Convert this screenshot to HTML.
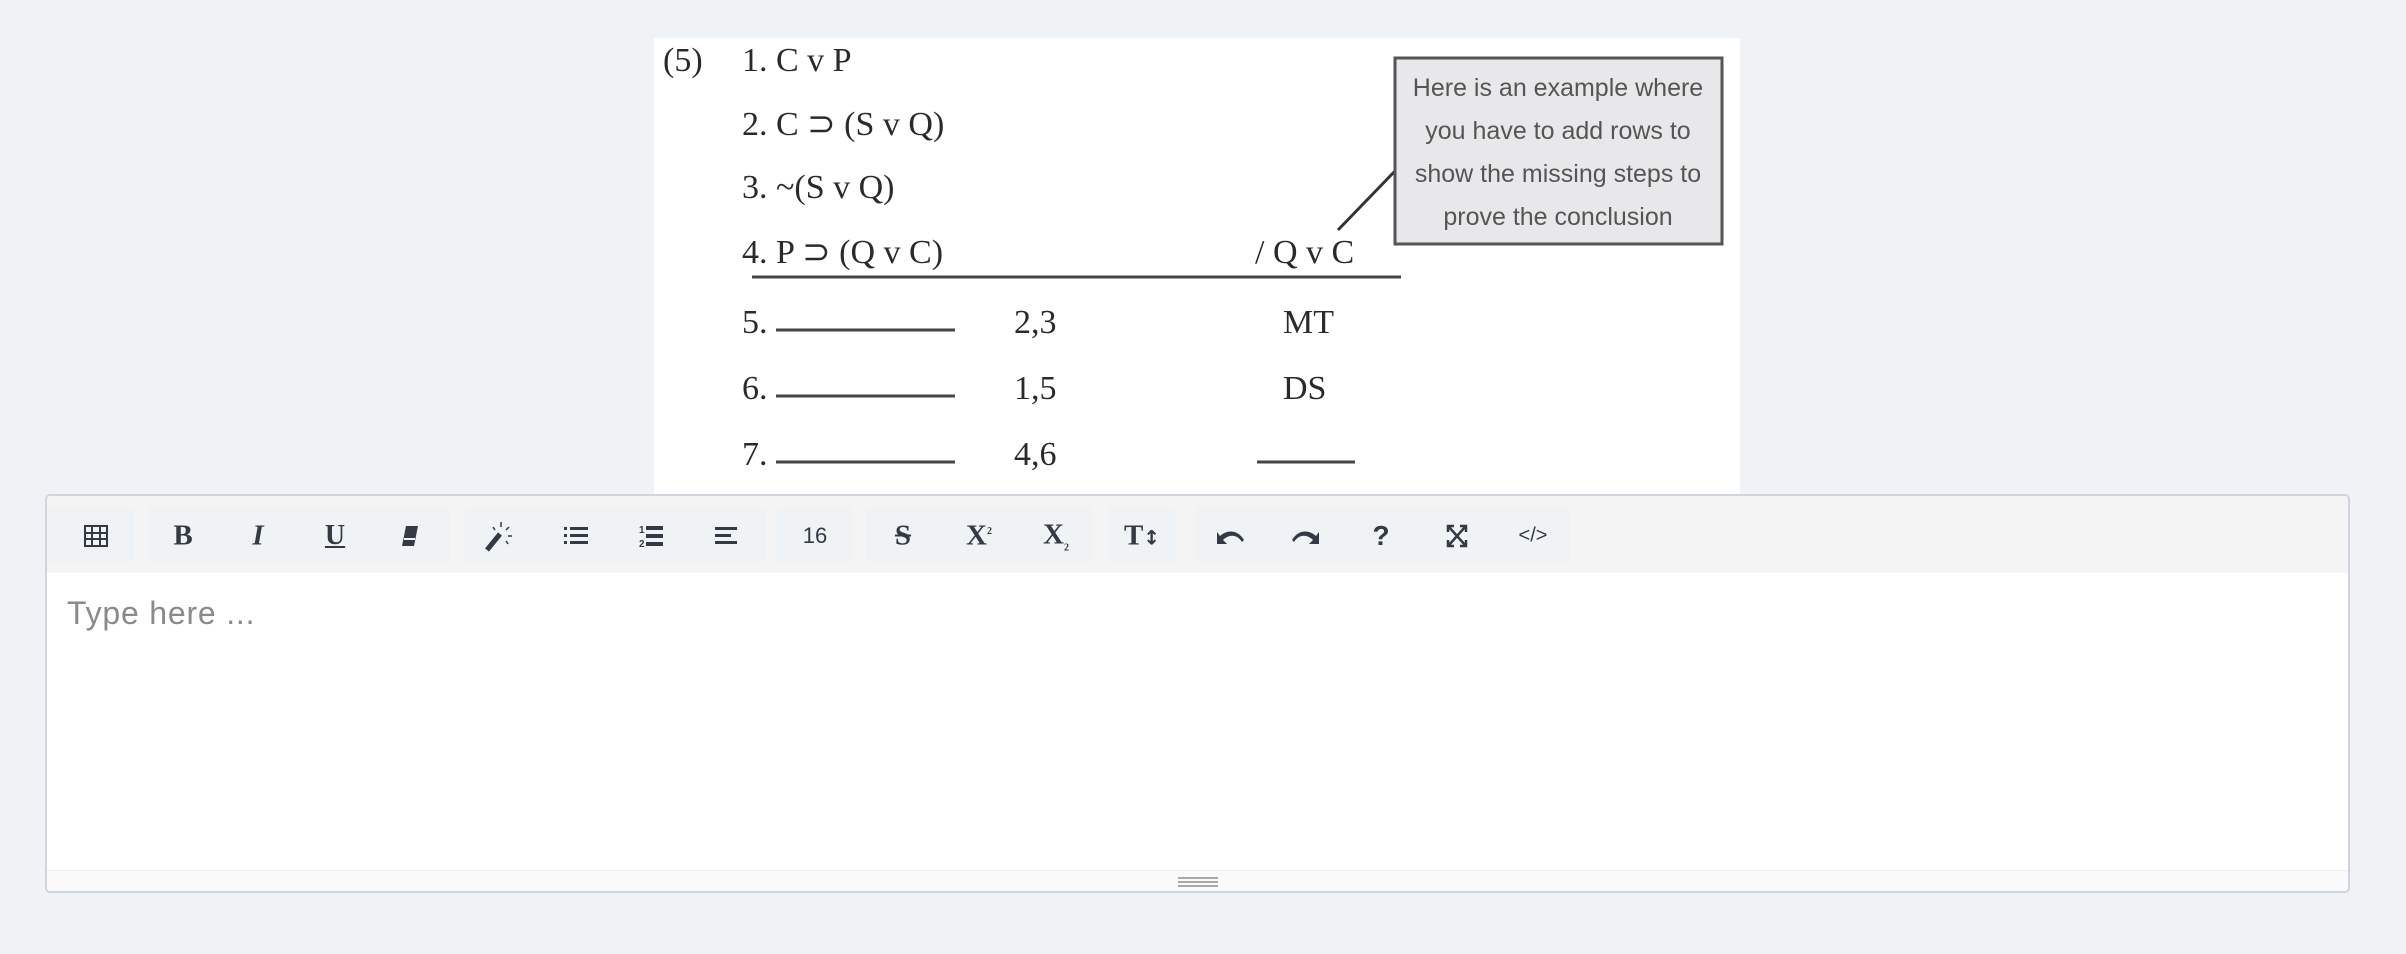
<!DOCTYPE html>
<html><head><meta charset="utf-8"><style>
html,body{margin:0;padding:0}
body{width:2406px;height:954px;background:#f0f3f6;position:relative;overflow:hidden;font-family:"Liberation Sans",sans-serif}
.img{position:absolute;left:654px;top:38px;width:1086px;height:460px;background:#fff}
.ed{position:absolute;left:45px;top:494px;width:2305px;height:399px;border:2px solid #d0d4dc;border-radius:5px;background:#fff;box-sizing:border-box;overflow:hidden}
.tb{position:absolute;left:0;top:0;right:0;height:77px;background:#f4f4f4}
.grp{position:absolute;top:11px;height:55px;background:#f0f3f6}
.ic{position:absolute;top:40px;transform:translate(-50%,-50%);color:#333a45;font-weight:bold}
.ph{position:absolute;left:20px;top:99px;font-size:32px;color:#8a8a8a;letter-spacing:0.8px}
.rs{position:absolute;left:0;right:0;bottom:0;height:20px;background:#fafafa;border-top:1px solid #eee}
.rs i{position:absolute;left:1131px;width:40px;height:2px;background:#a8a8a8}
</style></head><body>
<div class="img">
<svg width="1086" height="460" style="position:absolute;left:0;top:0" font-family="Liberation Serif,serif" font-size="34" fill="#2a2a2a">
<text x="9" y="33">(5)</text>
<text x="88" y="33">1. C v P</text>
<text x="88" y="97">2. C ⊃ (S v Q)</text>
<text x="88" y="160">3. ~(S v Q)</text>
<text x="88" y="225">4. P ⊃ (Q v C)</text>
<text x="601" y="225">/ Q v C</text>
<line x1="98" y1="239" x2="747" y2="239" stroke="#444" stroke-width="3"/>
<text x="88" y="295">5.</text><line x1="122" y1="292" x2="301" y2="292" stroke="#444" stroke-width="3"/><text x="360" y="295">2,3</text><text x="629" y="295">MT</text>
<text x="88" y="361">6.</text><line x1="122" y1="358" x2="301" y2="358" stroke="#444" stroke-width="3"/><text x="360" y="361">1,5</text><text x="629" y="361">DS</text>
<text x="88" y="427">7.</text><line x1="122" y1="424" x2="301" y2="424" stroke="#444" stroke-width="3"/><text x="360" y="427">4,6</text><line x1="603" y1="424" x2="701" y2="424" stroke="#444" stroke-width="3"/>
<line x1="684" y1="192" x2="741" y2="133" stroke="#333" stroke-width="3"/>
<rect x="741" y="20" width="327" height="186" fill="#e8e8ea" stroke="#555" stroke-width="3"/>
<g font-family="Liberation Sans,sans-serif" font-size="25" fill="#555" text-anchor="middle">
<text x="904" y="58">Here is an example where</text>
<text x="904" y="101">you have to add rows to</text>
<text x="904" y="144">show the missing steps to</text>
<text x="904" y="187">prove the conclusion</text>
</g>
</svg>
</div>
<div class="ed">
<div class="tb">
<div class="grp" style="left:0;width:87px"></div>
<div class="grp" style="left:102px;width:301px"></div>
<div class="grp" style="left:418px;width:301px"></div>
<div class="grp" style="left:730px;width:76px"></div>
<div class="grp" style="left:819px;width:227px"></div>
<div class="grp" style="left:1061px;width:67px"></div>
<div class="grp" style="left:1148px;width:375px"></div>
<svg class="ic" style="left:49px" width="24" height="22" viewBox="0 0 24 22"><g fill="none" stroke="#333a45" stroke-width="2"><rect x="1" y="1" width="22" height="20"/><path d="M1 8H23M1 14H23M8 1V21M16 1V21"/></g></svg>
<div class="ic" style="left:136px;font-family:'Liberation Serif',serif;font-size:29px">B</div>
<div class="ic" style="left:211px;font-family:'Liberation Serif',serif;font-size:29px;font-style:italic">I</div>
<div class="ic" style="left:288px;font-family:'Liberation Serif',serif;font-size:28px;text-decoration:underline">U</div>
<svg class="ic" style="left:363px" width="20" height="22" viewBox="0 0 20 22"><path d="M6 1H18L14 21H2Z" fill="#333a45"/><path d="M4 14H15" stroke="#f0f3f6" stroke-width="2"/></svg>
<svg class="ic" style="left:452px" width="30" height="32" viewBox="0 0 30 32"><path d="M3 30L16 14" stroke="#333a45" stroke-width="5"/><path d="M17 2V7M9 7L11 10M25 7L22 10M24 16H28M22 21L24 24" stroke="#333a45" stroke-width="1.5"/></svg>
<svg class="ic" style="left:529px" width="24" height="20" viewBox="0 0 24 20"><g fill="#333a45"><rect x="0" y="1" width="3" height="3"/><rect x="0" y="8" width="3" height="3"/><rect x="0" y="15" width="3" height="3"/><rect x="6" y="1" width="18" height="3"/><rect x="6" y="8" width="18" height="3"/><rect x="6" y="15" width="18" height="3"/></g></svg>
<svg class="ic" style="left:604px" width="24" height="24" viewBox="0 0 24 24"><g fill="#333a45"><text x="0" y="9" font-size="10" font-family="Liberation Sans">1</text><text x="0" y="23" font-size="10" font-family="Liberation Sans">2</text><rect x="7" y="2" width="17" height="4"/><rect x="7" y="10" width="17" height="4"/><rect x="7" y="18" width="17" height="4"/></g></svg>
<svg class="ic" style="left:679px" width="22" height="20" viewBox="0 0 22 20"><g fill="#333a45"><rect x="0" y="1" width="22" height="3"/><rect x="0" y="8" width="16" height="3"/><rect x="0" y="15" width="22" height="3"/></g></svg>
<div class="ic" style="left:768px;font-size:22px;font-weight:normal">16</div>
<div class="ic" style="left:856px;font-family:'Liberation Serif',serif;font-size:29px;text-decoration:line-through">S</div>
<div class="ic" style="left:932px;font-family:'Liberation Serif',serif;font-size:29px">X<sup style="font-size:10px">2</sup></div>
<div class="ic" style="left:1009px;font-family:'Liberation Serif',serif;font-size:29px">X<sub style="font-size:10px">2</sub></div>
<div class="ic" style="left:1095px;font-family:'Liberation Serif',serif;font-size:29px">T<span style="font-size:20px;font-family:'DejaVu Sans'">↕</span></div>
<svg class="ic" style="left:1183px" width="30" height="20" viewBox="0 0 30 20"><path d="M2 6V18H12L8 14C14 8 22 8 27 16L29 14C23 4 13 3 5 10Z" fill="#333a45"/></svg>
<svg class="ic" style="left:1259px" width="30" height="20" viewBox="0 0 30 20"><path d="M28 6V18H18L22 14C16 8 8 8 3 16L1 14C7 4 17 3 25 10Z" fill="#333a45"/></svg>
<div class="ic" style="left:1334px;font-size:28px">?</div>
<svg class="ic" style="left:1410px" width="22" height="24" viewBox="0 0 22 24"><g stroke="#333a45" stroke-width="2.5" fill="none"><path d="M3 3L19 21M19 3L3 21"/><path d="M2 8V2H8M14 2H20V8M2 16V22H8M14 22H20V16"/></g></svg>
<div class="ic" style="left:1486px;font-size:20px;font-weight:normal">&lt;/&gt;</div>
</div>
<div class="ph">Type here ...</div>
<div class="rs"><i style="top:6px"></i><i style="top:10px"></i><i style="top:14px"></i></div>
</div>
</body></html>
